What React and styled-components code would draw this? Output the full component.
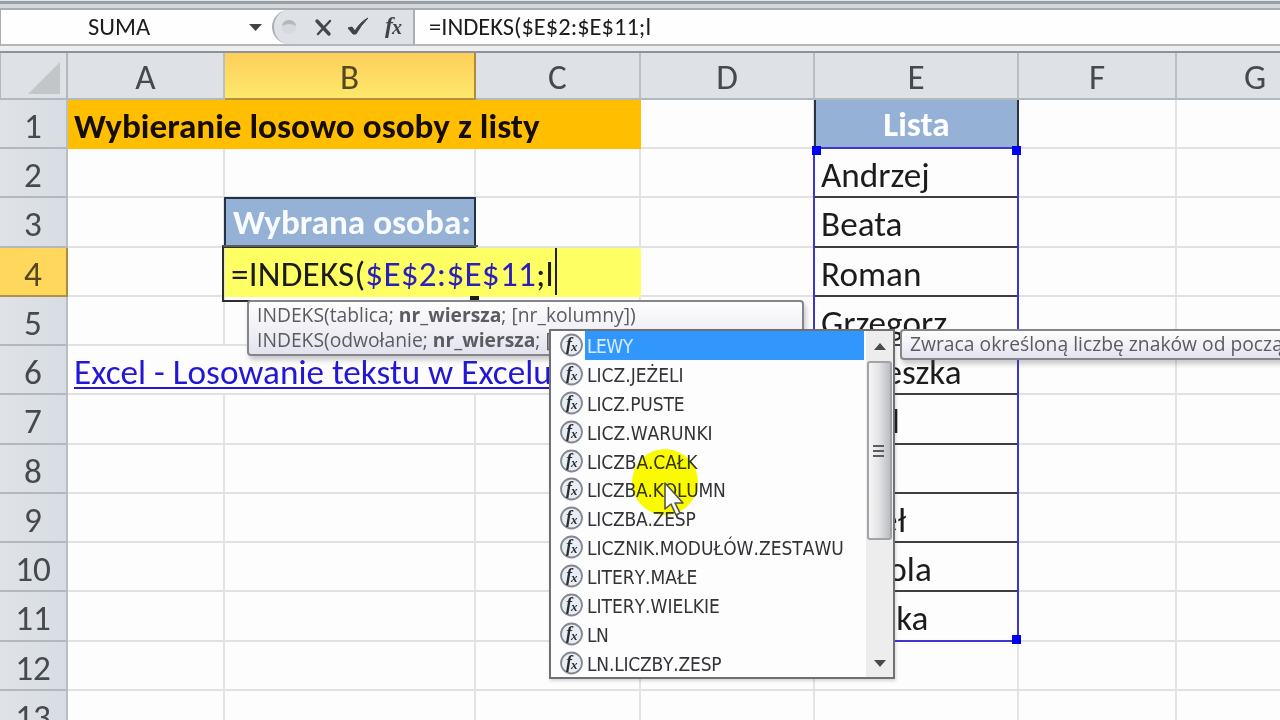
import React from "react";
import styled, { createGlobalStyle } from "styled-components";

const GlobalStyle = createGlobalStyle`
  * {
    box-sizing: border-box;
  }
  body {
    margin: 0;
    overflow: hidden;
    background: #fdfdfd;
  }
`;

const Window = styled.div`
  position: relative;
  display: flex;
  flex-direction: column;
  width: 1280px;
  height: 720px;
  overflow: hidden;
  font-family: Carlito, Lato, sans-serif;
  color: #1c1c1c;
`;

const RibbonEdge = styled.div`
  flex: none;
  height: 10px;
  background: linear-gradient(
    #e3e6e8 0 1px,
    #9a9ea3 1px 4px,
    #d2d7da 4px 8px,
    #a8adb1 8px 10px
  );
`;

const FormulaBar = styled.div`
  display: flex;
  flex: none;
  height: 36px;
  border-left: 1px solid #a9adb1;
  border-bottom: 2px solid #b3b7ba;
  background: #fefefe;
`;

const NameBox = styled.div`
  display: flex;
  align-items: center;
  width: 271px;
  padding-left: 87px;
`;

const BarText = styled.span`
  font-size: 24.5px;
  line-height: 35px;
  white-space: pre;
`;

const Arrow = styled.svg`
  display: block;
  margin-left: auto;
  margin-right: 10px;
`;

const Buttons = styled.div`
  display: flex;
  align-items: center;
  width: 143px;
  border: 1px solid #a9aeb3;
  border-width: 0 2px 0 2px;
  border-radius: 18px 0 0 18px;
  background: #dee1e5;
`;

const Formula = styled.div`
  flex: 1;
  padding-left: 14px;
`;

const BarGap = styled.div`
  flex: none;
  height: 7px;
  background: #eceeef;
  border-bottom: 2px solid #8f9398;
`;

const Sheet = styled.div`
  display: grid;
  flex: none;
  grid-template-columns: 68px 157px 251px 165px 174px 204px 158px 158px;
  grid-template-rows: 47px 49px 49px 50px 49px 49px 49px 50px 49px 49px 49px 50px 49px 49px;
`;

const Header = styled.div`
  display: flex;
  align-items: center;
  justify-content: center;
  padding-top: ${({ $row }) => ($row ? 4 : 2)}px;
  font-size: 35.2px;
  line-height: 1;
  color: ${({ $active }) => ($active ? "#54481f" : "#46494d")};
  border-right: 2px solid ${({ $active }) => ($active ? "#b08a3c" : "#b9bec3")};
  border-bottom: 2px solid ${({ $active }) => ($active ? "#b39144" : "#b3b8bc")};
  background: ${({ $active, $row }) => {
    if (!$active) return $row ? "linear-gradient(90deg, #dfe3e7, #d8dde3)" : "#dee1e5";
    return $row ? "#ffd75c" : "linear-gradient(#fdcf5b, #fee86c)";
  }};
`;

const Corner = styled.div`
  display: flex;
  align-items: flex-end;
  justify-content: flex-end;
  padding: 0 6px 4px 0;
  border: 1px solid #b3b8bc;
  border-width: 0 2px 2px 1px;
  background: #dee1e5;
`;

const Cell = styled.div`
  min-width: 0;
  padding: 4px 0 0 6px;
  font-size: 35.2px;
  line-height: 43px;
  white-space: pre;
  border-right: 2px solid #e1e3e5;
  border-bottom: 2px solid #dfe1e3;
  background: #fdfdfd;
`;

const TitleCell = styled(Cell)`
  grid-column: span 3;
  padding-top: 4px;
  font-weight: 700;
  color: #150d00;
  border: 0;
  background: #ffbf00;
`;

const LinkCell = styled(Cell)`
  grid-column: span 3;
  color: #2416d6;
  text-decoration: underline;
  text-decoration-thickness: 2px;
  text-underline-offset: 3px;
`;

const LabelCell = styled(Cell)`
  margin: -1px 0 0 -1px;
  padding: 1px 0 0 7px;
  font-weight: 700;
  color: #f8fcff;
  border: 2px solid #263244;
  background: #95b1d5;
`;

const ListHeader = styled(Cell)`
  margin-left: -1px;
  padding: 2px 0 0;
  font-weight: 700;
  text-align: center;
  color: #fff;
  border: 2px solid #2a333f;
  border-top: 0;
  background: #95b1d5;
`;

const ListCell = styled(Cell)`
  border-bottom-color: #3e3e40;
`;

const EditCell = styled(Cell)`
  position: relative;
  grid-column: span 2;
  padding: 4px 0 0 6px;
  letter-spacing: 0.2px;
  border: 0;
  background: #feff63;

  /* dark frame belongs only to the edited column */
  &::before {
    content: "";
    position: absolute;
    left: -3px;
    top: -3px;
    width: 254px;
    height: 53px;
    border: 2px solid #2d2d2b;
    border-right: 0;
    border-top-color: #5c5c50;
  }
`;

const Reference = styled.span`
  color: #2b1fbd;
`;

const Caret = styled.span`
  display: inline-block;
  width: 2px;
  height: 47px;
  margin: -4px 0 -12px 1px;
  vertical-align: top;
  background: #1f1f1f;
`;

const FillHandle = styled.div`
  position: absolute;
  left: 470px;
  top: 296px;
  width: 9px;
  height: 5px;
  background: #1d1d1d;
`;

const RangeFrame = styled.div`
  position: absolute;
  left: 813px;
  top: 147px;
  width: 206px;
  height: 495px;
  border: 2px solid #3d36cf;
`;

const Handle = styled.div`
  position: absolute;
  width: 9px;
  height: 9px;
  background: #0000f0;
  ${({ $corner }) => ($corner.includes("top") ? "top: -3px;" : "bottom: -4px;")}
  ${({ $corner }) => ($corner.includes("left") ? "left: -3px;" : "right: -4px;")}
`;

const Tooltip = styled.div`
  position: absolute;
  left: ${({ $left }) => $left}px;
  top: ${({ $top }) => $top}px;
  width: ${({ $width }) => $width}px;
  height: ${({ $height }) => $height}px;
  padding: 0 0 0 8px;
  font-family: "Open Sans", "Noto Sans", sans-serif;
  font-size: 19.3px;
  line-height: 25.4px;
  white-space: pre;
  color: #5b5b60;
  border: 2px solid #86868a;
  border-radius: 4px;
  background: linear-gradient(#fefefe, #e3e3ee);
  box-shadow: 2px 4px 5px rgba(80, 80, 90, 0.3);
`;

const ListBox = styled.div`
  position: absolute;
  left: 549px;
  top: 329px;
  width: 346px;
  height: 350px;
  display: flex;
  border: 2px solid #6f7073;
  background: #fdfdfd;
  box-shadow: 1px 2px 3px rgba(60, 60, 60, 0.2);
`;

const Options = styled.div`
  flex: 1;
  display: flex;
  flex-direction: column;
`;

const Option = styled.div`
  display: flex;
  align-items: center;
  height: 28.9px;
`;

const OptionText = styled.span`
  flex: 1;
  height: 28.9px;
  padding-left: 2px;
  margin-left: 1px;
  font-family: "DejaVu Sans Condensed", "DejaVu Sans", sans-serif;
  font-stretch: condensed;
  font-kerning: none;
  font-size: 19px;
  line-height: 30px;
  white-space: pre;
  letter-spacing: ${({ $spacing }) => $spacing}px;
  color: ${({ $selected }) => ($selected ? "#d8ecff" : "#333338")};
  background: ${({ $selected }) => ($selected ? "#3297fc" : "transparent")};
`;

const FunctionIcon = styled.svg`
  flex: none;
  margin-left: 8px;
  font-family: "Liberation Serif", serif;
  font-style: italic;
  font-weight: 700;
`;

const ScrollBar = styled.div`
  display: flex;
  flex-direction: column;
  align-items: center;
  justify-content: space-between;
  width: 27px;
  margin-left: 2px;
  padding: 12px 0 10px;
  background: #ededee;
`;

const Thumb = styled.div`
  display: flex;
  align-items: center;
  justify-content: center;
  width: 25px;
  height: 179px;
  margin: 11px 1px auto 0;
  border: 2px solid #a2a3a6;
  border-radius: 3px;
  background: linear-gradient(90deg, #f5f5f5, #e5e5e7 45%, #bcbdc1);
`;

const Highlight = styled.div`
  position: absolute;
  left: 632px;
  top: 449px;
  width: 66px;
  height: 66px;
  border-radius: 50%;
  background: #fcfc00;
  mix-blend-mode: multiply;
`;

const Pointer = styled.svg`
  position: absolute;
  left: 663px;
  top: 481px;
`;

const columns = ["A", "B", "C", "D", "E", "F", "G"];
const rows = [1, 2, 3, 4, 5, 6, 7, 8, 9, 10, 11, 12, 13];

const people = {
  2: "Andrzej",
  3: "Beata",
  4: "Roman",
  5: "Grzegorz",
  6: "Agnieszka",
  7: "Kamil",
  8: "Ewa",
  9: "Paweł",
  10: "Mariola",
  11: "Monika",
};

const functions = [
  ["LEWY", -0.5],
  ["LICZ.JEŻELI", 0],
  ["LICZ.PUSTE", -0.1],
  ["LICZ.WARUNKI", 0],
  ["LICZBA.CAŁK", -0.1],
  ["LICZBA.KOLUMN", -0.2],
  ["LICZBA.ZESP", -0.2],
  ["LICZNIK.MODUŁÓW.ZESTAWU", 0],
  ["LITERY.MAŁE", 0],
  ["LITERY.WIELKIE", 0],
  ["LN", -0.5],
  ["LN.LICZBY.ZESP", -0.2],
];

const FxIcon = () => (
  <FunctionIcon width="25" height="25" viewBox="0 0 25 25">
    <circle cx="12.5" cy="12" r="10.5" fill="#e9edf5" stroke="#85888f" strokeWidth="1.8" />
    <text x="7" y="17" fontSize="18" fill="#2b2d33">f</text>
    <text x="12" y="18" fontSize="13" fill="#2b2d33">x</text>
  </FunctionIcon>
);

const FormulaControls = () => (
  <Buttons>
    <svg width="139" height="34" viewBox="0 0 139 34">
      <circle cx="15" cy="17" r="7" fill="#d6d9dd" />
      <path d="M8 16a7 6 0 0 1 14 0q-7-4-14 0z" fill="#b4b7bb" />
      <path d="M43 11 55 24" stroke="#44474b" strokeWidth="3.4" strokeLinecap="round" />
      <path d="M56 11 44 24" stroke="#44474b" strokeWidth="2.4" strokeLinecap="round" />
      <path d="M74 18l4-1 3 4q5-9 13-13q-7 7-12 16h-3z" fill="#404347" stroke="#404347" strokeWidth="1" />
      <g fontFamily="Liberation Serif, serif" fontStyle="italic" fontWeight="700" fill="#404347">
        <text x="111" y="23" fontSize="24">f</text>
        <text x="118" y="24" fontSize="20">x</text>
      </g>
    </svg>
  </Buttons>
);

const RowCells = ({ row }) => {
  const tail = [<Cell key="f" />, <Cell key="g" />];
  const person = people[row] ? <ListCell>{people[row]}</ListCell> : <Cell />;

  if (row === 1) {
    return (
      <>
        <TitleCell>Wybieranie losowo osoby z listy</TitleCell>
        <Cell />
        <ListHeader>Lista</ListHeader>
        {tail}
      </>
    );
  }
  if (row === 6) {
    return (
      <>
        <LinkCell>Excel - Losowanie tekstu w Excelu</LinkCell>
        <Cell />
        {person}
        {tail}
      </>
    );
  }
  return (
    <>
      <Cell />
      {row === 4 ? (
        <EditCell>
          =INDEKS(<Reference>$E$2:$E$11</Reference>;l<Caret />
        </EditCell>
      ) : (
        <>
          {row === 3 ? <LabelCell>Wybrana osoba:</LabelCell> : <Cell />}
          <Cell />
        </>
      )}
      <Cell />
      {person}
      {tail}
    </>
  );
};

const App = () => {
  return (
    <Window>
      <GlobalStyle />
      <RibbonEdge />
      <FormulaBar>
        <NameBox>
          <BarText>SUMA</BarText>
          <Arrow width="13" height="8" viewBox="0 0 13 8">
            <path d="M0 1h13L6.500 8z" fill="#404347" />
          </Arrow>
        </NameBox>
        <FormulaControls />
        <Formula>
          <BarText>=INDEKS($E$2:$E$11;l</BarText>
        </Formula>
      </FormulaBar>
      <BarGap />
      <Sheet>
        <Corner>
          <svg width="32" height="32" viewBox="0 0 32 32">
            <path d="M32 0v32H0z" fill="#c3c6c8" />
          </svg>
        </Corner>
        {columns.map((name) => (
          <Header key={name} $active={name === "B"}>
            {name}
          </Header>
        ))}
        {rows.map((row) => (
          <React.Fragment key={row}>
            <Header $row $active={row === 4}>
              {row}
            </Header>
            <RowCells row={row} />
          </React.Fragment>
        ))}
      </Sheet>
      <FillHandle />
      <RangeFrame>
        <Handle $corner="top left" />
        <Handle $corner="top right" />
        <Handle $corner="bottom right" />
      </RangeFrame>
      <Tooltip $left={247} $top={300} $width={557} $height={56}>
        INDEKS(tablica; <b>nr_wiersza</b>; [nr_kolumny]){"\n"}
        INDEKS(odwołanie; <b>nr_wiersza</b>; [nr_kolumny]; [nr_obszaru])
      </Tooltip>
      <Tooltip $left={900} $top={329} $width={420} $height={31}>
        Zwraca określoną liczbę znaków od początku
      </Tooltip>
      <ListBox>
        <Options>
          {functions.map(([name, spacing], index) => (
            <Option key={name}>
              <FxIcon />
              <OptionText $selected={index === 0} $spacing={spacing}>
                {name}
              </OptionText>
            </Option>
          ))}
        </Options>
        <ScrollBar>
          <svg width="12" height="7" viewBox="0 0 12 7">
            <path d="M0 7h12L6 0z" fill="#4a4a4d" />
          </svg>
          <Thumb>
            <svg width="12" height="14" viewBox="0 0 12 14">
              <path d="M0 2h11M0 7h11M0 12h11" stroke="#5b5c60" strokeWidth="2" />
            </svg>
          </Thumb>
          <svg width="12" height="7" viewBox="0 0 12 7">
            <path d="M0 0h12L6 7z" fill="#4a4a4d" />
          </svg>
        </ScrollBar>
      </ListBox>
      <Highlight />
      <Pointer width="22" height="36" viewBox="0 0 22 36">
        <path
          d="M2 2v26l6-5 5 11 4-2-5-10h8z"
          fill="#fdfdfd"
          stroke="#55554a"
          strokeWidth="1.6"
          strokeLinejoin="round"
        />
      </Pointer>
    </Window>
  );
};

export default App;
